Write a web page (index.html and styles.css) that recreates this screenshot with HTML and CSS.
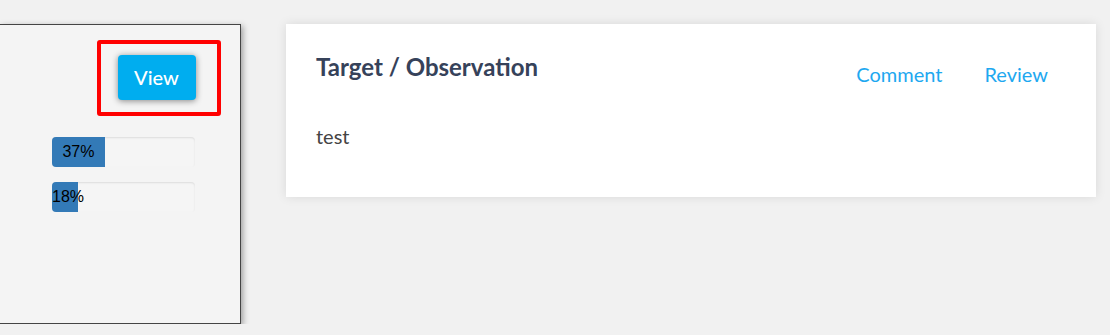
FILE: index.html
```html
<!DOCTYPE html>
<html lang="en">
<head>
<meta charset="utf-8">
<title>Target / Observation</title>
<link rel="stylesheet" href="styles.css">
</head>
<body>
<div class="page">
  <aside class="side-panel">
    <div class="action-row">
      <div class="highlight">
        <button class="btn-view" type="button">View</button>
      </div>
    </div>
    <div class="progress-list">
      <div class="progress"><div class="progress-bar" style="width:37%">37%</div></div>
      <div class="progress"><div class="progress-bar" style="width:18%">18%</div></div>
    </div>
  </aside>
  <section class="card">
    <header class="card-header">
      <h2 class="card-title">Target / Observation</h2>
      <nav class="card-links">
        <a class="card-link" href="#">Comment</a>
        <a class="card-link" href="#">Review</a>
      </nav>
    </header>
    <p class="card-text">test</p>
  </section>
</div>
</body>
</html>
```
FILE: styles.css
```css
html, body {
  margin: 0;
  padding: 0;
  background: #f1f1f1;
  font-family: Lato, "Open Sans", sans-serif;
}

.page {
  display: flex;
  align-items: flex-start;
  gap: 45px;
  padding-top: 24px;
}

.side-panel {
  box-sizing: border-box;
  width: 241px;
  height: 300px;
  background: #f4f4f4;
  border: 1px solid #444;
  border-left: none;
  box-shadow: 2px 2px 6px rgba(0, 0, 0, 0.35);
}

.action-row {
  display: flex;
  justify-content: flex-end;
  padding: 15px 19px 0 0;
}

.highlight {
  box-sizing: border-box;
  width: 124px;
  height: 76px;
  border: 4px solid #ff0000;
  border-radius: 3px;
  padding: 11px 21px 12px 17px;
}

.btn-view {
  display: block;
  box-sizing: border-box;
  width: 78px;
  height: 45px;
  border: none;
  border-radius: 4px;
  background: #00adef;
  color: #fff;
  font-family: Lato, sans-serif;
  font-size: 20px;
  font-weight: 500;
  box-shadow: 0 1px 6px rgba(0, 0, 0, 0.45);
  cursor: pointer;
  padding: 0 1px 2px 0;
}

.progress-list {
  display: flex;
  flex-direction: column;
  gap: 15px;
  margin: 21px 0 0 52px;
  width: 143px;
}

.progress {
  height: 30px;
  background: #f5f5f5;
  border-radius: 4px;
  overflow: hidden;
  box-shadow: inset 0 1px 2px rgba(0, 0, 0, 0.1);
}

.progress-bar {
  height: 100%;
  background: #337ab7;
  color: #000;
  font-family: "Liberation Sans", Arial, sans-serif;
  font-size: 16px;
  line-height: 30px;
  text-align: center;
  white-space: nowrap;
}

.card {
  box-sizing: border-box;
  width: 810px;
  background: #fff;
  padding: 29px 48px 49px 30px;
  box-shadow: 0 0 10px rgba(0, 0, 0, 0.1);
}

.card-header {
  display: flex;
  justify-content: space-between;
  align-items: flex-start;
}

.card-title {
  margin: 0;
  font-size: 24px;
  line-height: 1.2;
  font-weight: 700;
  color: #36425a;
}

.card-links {
  display: flex;
  gap: 42px;
  margin-top: 9px;
}

.card-link {
  font-size: 20px;
  line-height: 1.2;
  color: #1ea8f0;
  text-decoration: none;
}

.card-text {
  margin: 38px 0 0;
  font-size: 20px;
  line-height: 1.2;
  color: #444;
}
```
